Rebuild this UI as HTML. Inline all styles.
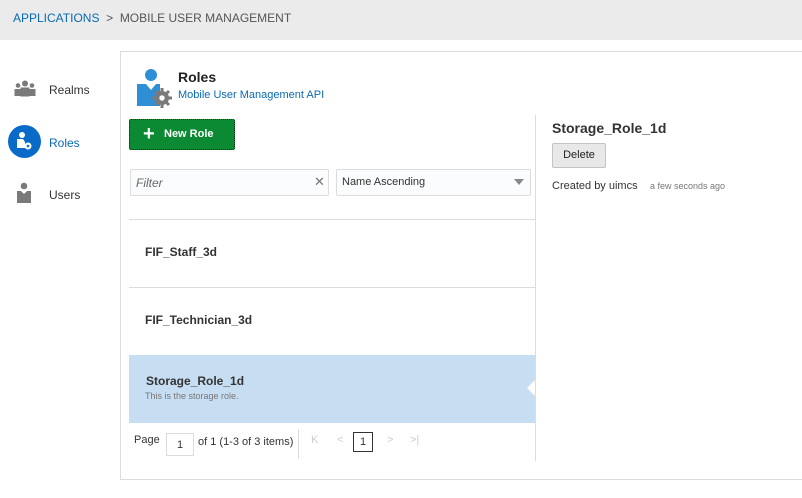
<!DOCTYPE html>
<html><head><style>
*{box-sizing:border-box;margin:0;padding:0}
body{width:802px;height:498px;background:#fff;font-family:"Liberation Sans",sans-serif;position:relative;overflow:hidden;color:#333}
.abs{position:absolute}
</style></head><body>
<div class="abs" style="left:0;top:0;width:802px;height:40px;background:#ebebeb"></div>
<div class="abs" style="left:13px;top:11px;font-size:12px;color:#555"><span style="color:#0a6ab6">APPLICATIONS</span> &nbsp;&gt;&nbsp; MOBILE USER MANAGEMENT</div>

<svg class="abs" style="left:14px;top:80px" width="22" height="18" viewBox="0 0 22 18"><g fill="#7a7a7a"><circle cx="11" cy="3.5" r="3"/><circle cx="4" cy="5.5" r="2.3"/><circle cx="18" cy="5.5" r="2.3"/><rect x="6.5" y="7.5" width="9" height="9"/><rect x="0.5" y="9" width="6" height="7"/><rect x="15.5" y="9" width="6" height="7"/></g></svg>
<div class="abs" style="left:49px;top:83px;font-size:12px;color:#333">Realms</div>
<div class="abs" style="left:8px;top:125px;width:33px;height:33px;border-radius:50%;background:#0a6ac8"></div>
<svg class="abs" style="left:14px;top:131px" width="22" height="22" viewBox="0 0 22 22"><g fill="#fff"><circle cx="8" cy="4" r="3"/><path d="M3 8h6l2 3v6H3z"/><circle cx="14" cy="15" r="3.5"/></g><circle cx="14" cy="15" r="1.3" fill="#0a6ac8"/></svg>
<div class="abs" style="left:49px;top:136px;font-size:12px;color:#0a6ab6">Roles</div>
<svg class="abs" style="left:16px;top:182px" width="16" height="22" viewBox="0 0 16 22"><g fill="#7a7a7a"><circle cx="8" cy="4" r="3.3"/><path d="M1 9h4l3 3 3-3h4v12H1z"/></g></svg>
<div class="abs" style="left:49px;top:188px;font-size:12px;color:#333">Users</div>

<div class="abs" style="left:120px;top:51px;width:690px;height:429px;background:#fff;border:1px solid #dcdcdc"></div>
<svg class="abs" style="left:136px;top:68px" width="36" height="40" viewBox="0 0 36 40"><g fill="#2f8fd6"><circle cx="15" cy="7" r="6"/><path d="M1 16h9l5 6 5-6h4v22H1z"/></g><g fill="#7a7a7a"><circle cx="26" cy="30" r="7"/><g stroke="#7a7a7a" stroke-width="3"><path d="M26 20v20M16 30h20M19 23l14 14M33 23L19 37"/></g></g><circle cx="26" cy="30" r="2.7" fill="#fff"/></svg>
<div class="abs" style="left:178px;top:69px;font-size:14px;font-weight:bold;color:#222">Roles</div>
<div class="abs" style="left:178px;top:89px;font-size:11px;color:#0a6ab6">Mobile User Management API</div>

<div class="abs" style="left:129px;top:119px;width:106px;height:31px;background:#0c8a33;border:1px dotted #222;border-radius:2px"></div>
<div class="abs" style="left:143px;top:124px;font-size:20px;font-weight:bold;color:#fff;line-height:20px">+</div>
<div class="abs" style="left:164px;top:128px;font-size:11px;font-weight:bold;color:#fff">New Role</div>

<div class="abs" style="left:130px;top:169px;width:199px;height:27px;border:1px solid #dcdcdc;border-radius:2px;background:#fbfcfd"></div>
<div class="abs" style="left:136px;top:176px;font-size:12px;font-style:italic;color:#666">Filter</div>
<div class="abs" style="left:314px;top:174px;font-size:13px;color:#777">✕</div>
<div class="abs" style="left:336px;top:169px;width:195px;height:27px;border:1px solid #dcdcdc;border-radius:2px;background:#fbfcfd"></div>
<div class="abs" style="left:342px;top:176px;font-size:11px;color:#333">Name Ascending</div>
<div class="abs" style="left:514px;top:179px;width:0;height:0;border-left:5px solid transparent;border-right:5px solid transparent;border-top:6px solid #888"></div>

<div class="abs" style="left:129px;top:219px;width:406px;height:1px;background:#dcdcdc"></div>
<div class="abs" style="left:145px;top:245px;font-size:12px;font-weight:bold;color:#333">FIF_Staff_3d</div>
<div class="abs" style="left:129px;top:287px;width:406px;height:1px;background:#dcdcdc"></div>
<div class="abs" style="left:145px;top:313px;font-size:12px;font-weight:bold;color:#333">FIF_Technician_3d</div>
<div class="abs" style="left:129px;top:355px;width:406px;height:68px;background:#c6ddf2"></div>
<div class="abs" style="left:527px;top:379px;width:0;height:0;border-top:9px solid transparent;border-bottom:9px solid transparent;border-right:9px solid #fff"></div>
<div class="abs" style="left:146px;top:374px;font-size:12px;font-weight:bold;color:#333">Storage_Role_1d</div>
<div class="abs" style="left:145px;top:391px;font-size:9px;color:#777">This is the storage role.</div>
<div class="abs" style="left:535px;top:115px;width:1px;height:346px;background:#dcdcdc"></div>

<div class="abs" style="left:134px;top:434px;font-size:11px;color:#333">Page</div>
<div class="abs" style="left:166px;top:433px;width:28px;height:23px;border:1px solid #dcdcdc;font-size:11px;text-align:center;line-height:23px">1</div>
<div class="abs" style="left:198px;top:436px;font-size:11px;color:#333">of 1 (1-3 of 3 items)</div>
<div class="abs" style="left:298px;top:429px;width:1px;height:30px;background:#dcdcdc"></div>
<div class="abs" style="left:311px;top:434px;font-size:11px;color:#ccc">K</div>
<div class="abs" style="left:337px;top:434px;font-size:11px;color:#ccc">&lt;</div>
<div class="abs" style="left:353px;top:432px;width:20px;height:20px;border:1px solid #333;font-size:11px;text-align:center;line-height:18px">1</div>
<div class="abs" style="left:387px;top:434px;font-size:11px;color:#ccc">&gt;</div>
<div class="abs" style="left:410px;top:434px;font-size:11px;color:#ccc">&gt;|</div>

<div class="abs" style="left:552px;top:120px;font-size:14px;font-weight:bold;color:#333">Storage_Role_1d</div>
<div class="abs" style="left:552px;top:143px;width:54px;height:25px;border:1px solid #c4c4c4;border-radius:2px;background:#e8e8e8;font-size:11px;text-align:center;line-height:23px;color:#222">Delete</div>
<div class="abs" style="left:552px;top:180px;font-size:11px;color:#333">Created by uimcs</div>
<div class="abs" style="left:650px;top:181px;font-size:9px;color:#777">a few seconds ago</div>
</body></html>
